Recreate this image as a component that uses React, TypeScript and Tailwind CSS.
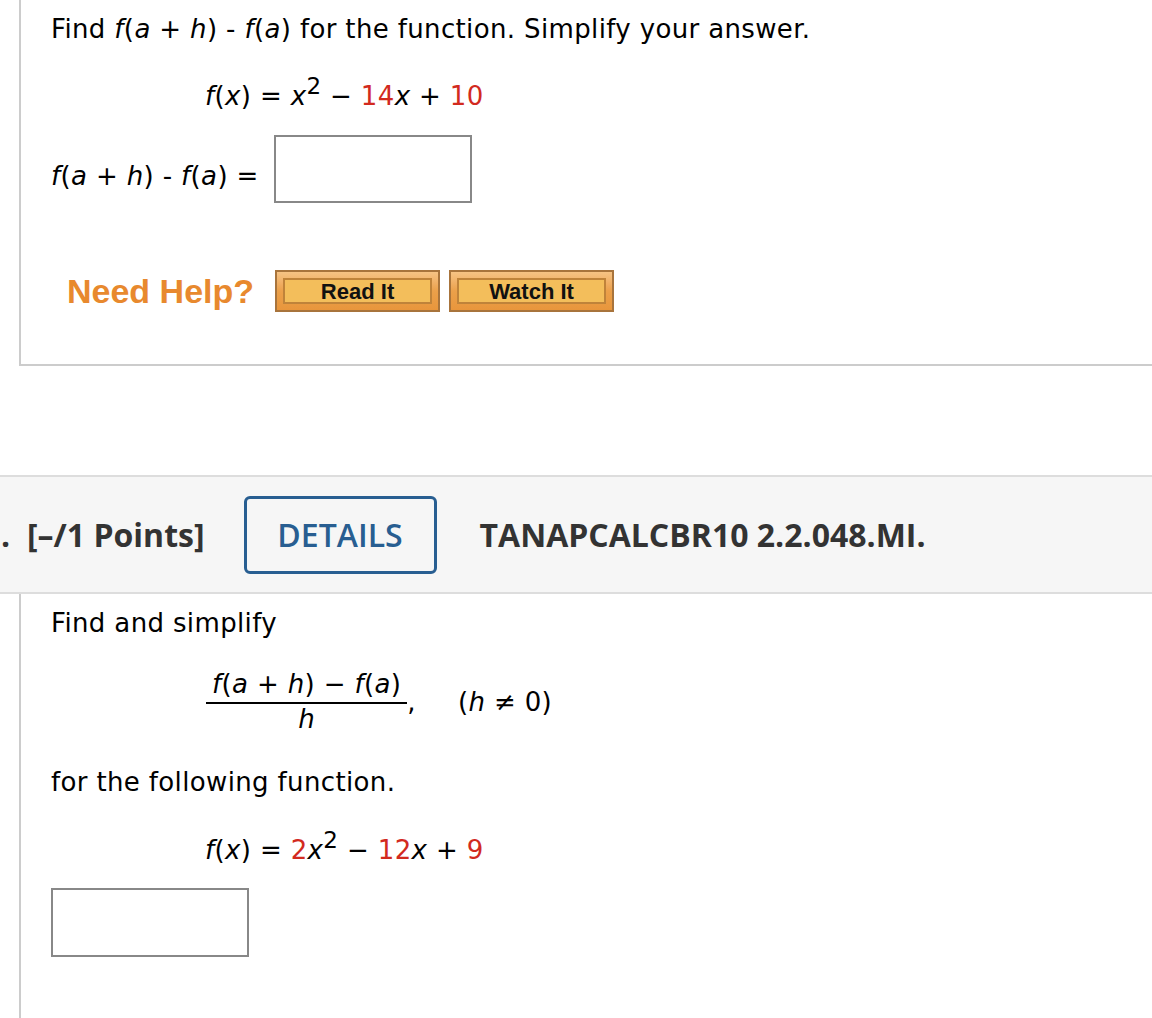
import React from "react";

function R({ children }: { children: React.ReactNode }) {
  return <span className="text-[#d22a1e]">{children}</span>;
}

function Sq() {
  return (
    <span className="relative -top-[11px] text-[23px] leading-none">2</span>
  );
}

function HelpButton({ label }: { label: string }) {
  return (
    <div className="w-[165px] h-[42px] border-2 border-[#a8743c] bg-linear-to-b from-[#f6c384] via-[#eba04a] to-[#e8963c] p-[6px]">
      <div className="h-full border-2 border-[#bf833a] bg-[#f3be5b] flex items-center justify-center pt-[2px] font-['Liberation_Sans',sans-serif] font-bold text-[22px] leading-none tracking-normal text-[#111111]">
        {label}
      </div>
    </div>
  );
}

export default function App() {
  return (
    <div className="w-[1152px] h-[1018px] overflow-hidden bg-white font-['DejaVu_Sans',Verdana,sans-serif] text-[26px] leading-[30px] tracking-[0.36px] text-black">
      {/* Top card */}
      <div className="ml-[19px] border-l-2 border-b-2 border-[#cccccc] pl-[30px] pt-[14px] pb-[52px]">
        <p>
          Find <i>f</i>(<i>a</i> + <i>h</i>) - <i>f</i>(<i>a</i>) for the function. Simplify your answer.
        </p>
        <p className="mt-[37px] pl-[154px] whitespace-nowrap">
          <i>f</i>(<i>x</i>) = <i>x</i>
          <Sq /> − <R>14</R>
          <i>x</i> + <R>10</R>
        </p>
        <div className="mt-[24px] flex items-start">
          <span className="mt-[26px] whitespace-nowrap">
            <i>f</i>(<i>a</i> + <i>h</i>) - <i>f</i>(<i>a</i>) =
          </span>
          <div className="ml-[15px] w-[198px] h-[68px] border-2 border-[#888888] bg-white" />
        </div>
        <div className="mt-[67px] flex items-center pl-[16px]">
          <span className="font-['Liberation_Sans',sans-serif] font-bold text-[34px] leading-none tracking-normal text-[#e8892e]">
            Need Help?
          </span>
          <div className="ml-[21px] flex gap-[9px]">
            <HelpButton label="Read It" />
            <HelpButton label="Watch It" />
          </div>
        </div>
      </div>

      {/* Question header */}
      <div className="mt-[109px] h-[119px] border-y-2 border-[#dddddd] bg-[#f6f6f6] flex items-center font-['Open_Sans',sans-serif] text-[32px] tracking-normal text-[#333333] whitespace-nowrap">
        <span className="w-[27px] pl-[1px] font-bold">.</span>
        <span className="font-bold">[–/1 Points]</span>
        <div className="ml-[39px] w-[193px] h-[78px] border-[3px] border-[#285e91] rounded-[6px] flex items-center justify-center font-semibold text-[#285e91]">
          DETAILS
        </div>
        <span className="ml-[43px] font-bold">TANAPCALCBR10 2.2.048.MI.</span>
      </div>

      {/* Bottom card */}
      <div className="ml-[19px] border-l-2 border-[#cccccc] pl-[30px] pt-[14px] h-[424px]">
        <p>Find and simplify</p>
        <div className="mt-[31px] pl-[155px] flex items-center whitespace-nowrap">
          <div className="flex flex-col">
            <div className="px-[6px] pb-[3px] text-center">
              <i>f</i>(<i>a</i> + <i>h</i>) − <i>f</i>(<i>a</i>)
            </div>
            <div className="h-[2px] bg-black" />
            <div className="text-center">
              <i>h</i>
            </div>
          </div>
          <span>,</span>
          <span className="ml-[42px]">
            (<i>h</i> ≠ 0)
          </span>
        </div>
        <p className="mt-[33px]">for the following function.</p>
        <p className="mt-[38px] pl-[154px] whitespace-nowrap">
          <i>f</i>(<i>x</i>) = <R>2</R>
          <i>x</i>
          <Sq /> − <R>12</R>
          <i>x</i> + <R>9</R>
        </p>
        <div className="mt-[23px] w-[198px] h-[69px] border-2 border-[#888888] bg-white" />
      </div>
    </div>
  );
}
